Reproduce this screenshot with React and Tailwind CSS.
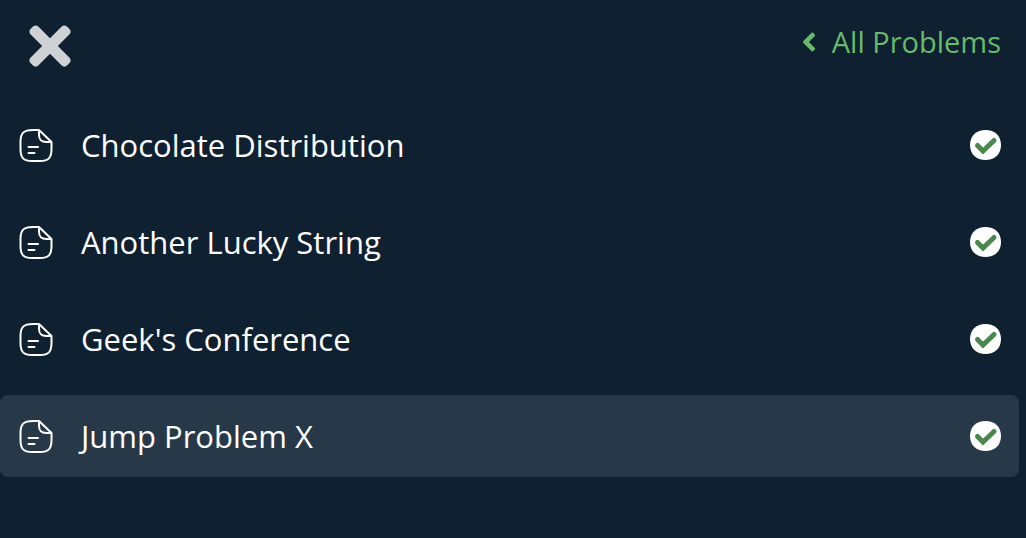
import React, { useState } from 'react';
import { FaAngleLeft, FaTimes } from 'react-icons/fa';

const problems = [
  { id: 1, title: 'Chocolate Distribution', solved: true },
  { id: 2, title: 'Another Lucky String', solved: true },
  { id: 3, title: "Geek's Conference", solved: true },
  { id: 4, title: 'Jump Problem X', solved: true },
];

// ===== Icons =====
const ProblemIcon = () => (
  <svg
    className="size-[34px] shrink-0"
    viewBox="0 0 34 34"
    fill="none"
    stroke="currentColor"
    strokeWidth="2"
    strokeLinecap="round"
    strokeLinejoin="round"
    aria-hidden="true"
  >
    <path d="M20 2H14C4.500 2 1.500 5 1.500 14V21C1.500 30 4.500 33 13 33H21C29.500 33 32.500 30 32.500 21V14L20 2V6.500C20 12 22 14 27.500 14H32.500" />
    <path d="M9.500 19H19M9.500 25H15.500" />
  </svg>
);

const SolvedBadge = () => (
  <svg className="h-[30px] w-[31px] shrink-0" viewBox="0 0 31 30" fill="none" role="img" aria-label="Solved">
    <path
      d="M15.500 0C24.500 0 31 5.500 31 15S24.500 30 15.500 30S0 24.500 0 15S6.500 0 15.500 0Z"
      fill="#ffffff"
    />
    <path
      d="M7.500 15.500L13 21L24 10.500"
      stroke="#48884c"
      strokeWidth="5"
      strokeLinecap="round"
      strokeLinejoin="miter"
    />
  </svg>
);

// ===== List row =====
const ProblemRow = ({ problem, active, onSelect }) => (
  <li>
    <button
      type="button"
      onClick={() => onSelect(problem.id)}
      aria-current={active ? 'true' : undefined}
      className={`flex w-full cursor-pointer items-center gap-7 rounded-lg py-5 pr-[18px] pl-[19px] text-left ${active ? 'bg-[#273948]' : ''}`}
    >
      <ProblemIcon />
      <span className="flex-1 text-[31px] leading-[42px]">{problem.title}</span>
      {problem.solved && <SolvedBadge />}
    </button>
  </li>
);

const App = () => {
  const [activeId, setActiveId] = useState(4);

  return (
    <div className="min-h-screen bg-[#0f2130] pr-[7px] font-['Open_Sans',sans-serif] text-white">
      <header className="flex items-start justify-between pt-4 pr-[18px] pb-7 pl-5">
        <button type="button" aria-label="Close" className="cursor-pointer text-[#cfd2d5]">
          <FaTimes size={60} />
        </button>
        <a href="#problems" className="flex items-center gap-2 pt-2 text-[29px] leading-9 text-[#66bb6a]">
          <FaAngleLeft size={30} />
          All Problems
        </a>
      </header>

      <ul id="problems" className="flex flex-col gap-[15px]">
        {problems.map(problem => (
          <ProblemRow
            key={problem.id}
            problem={problem}
            active={problem.id === activeId}
            onSelect={setActiveId}
          />
        ))}
      </ul>
    </div>
  );
};

export default App;
